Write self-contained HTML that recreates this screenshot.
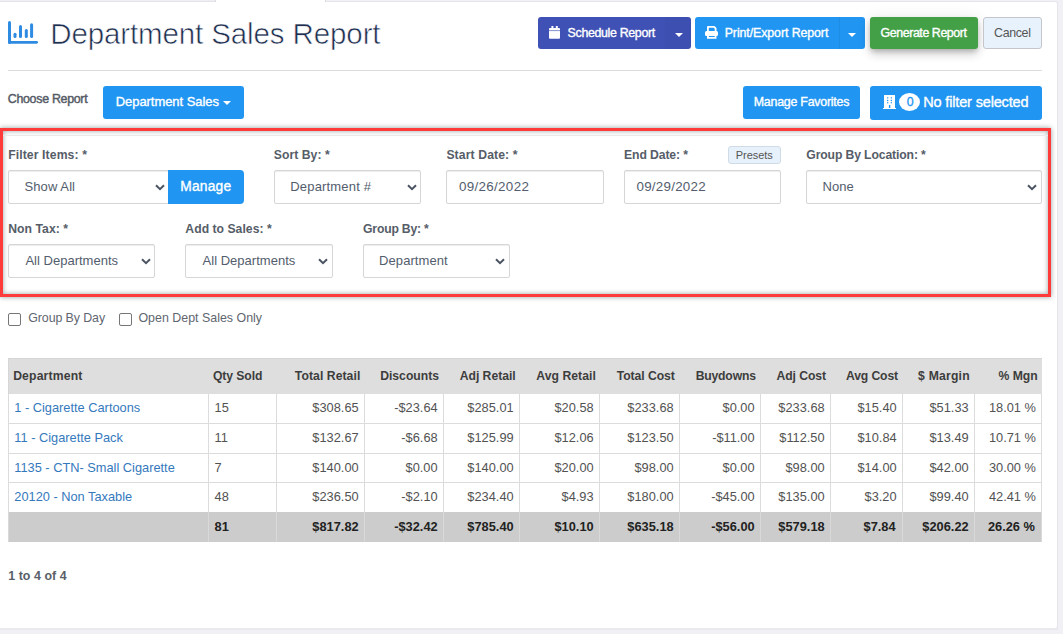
<!DOCTYPE html>
<html><head><meta charset="utf-8">
<style>
*{box-sizing:border-box;margin:0;padding:0}
html,body{width:1063px;height:634px;overflow:hidden;background:#f1f1f5;font-family:"Liberation Sans",sans-serif;position:relative}
.a{position:absolute}
.t{position:absolute;white-space:nowrap;line-height:normal;font-family:"Liberation Sans",sans-serif}
.sel{position:absolute;height:34px;border:1px solid #d6d5d7;border-radius:2px;background:#fff;box-shadow:inset 0 1px 1px rgba(0,0,0,0.075)}
.chev{position:absolute;width:10px;height:7px}
.vl{position:absolute;width:1px;background:#dcdcdc}
.hl{position:absolute;height:1px;background:#dcdcdc}
</style></head><body>
<!-- card -->
<div class="a" style="left:-10px;top:1px;width:1068px;height:628px;background:#e5e6eb;border-radius:3px"></div>
<div class="a" style="left:-10px;top:2px;width:1067px;height:626px;background:#fff;border-radius:2px"></div>
<div class="a" style="left:-10px;top:628px;width:1068px;height:2px;background:#e9e9ee"></div>
<!-- tab gap -->
<div class="a" style="left:0;top:0;width:216px;height:2px;background:#eeeef3;border-bottom:1px solid #e4e5ea"></div>
<div class="a" style="left:215px;top:0;width:1px;height:2px;background:#dcdcdf"></div>
<div class="a" style="left:216px;top:0;width:109px;height:3px;background:#fff"></div>
<div class="a" style="left:325px;top:0;width:1px;height:2px;background:#dcdcdf"></div>

<!-- title icon -->
<svg class="a" style="left:8px;top:21px" width="31" height="23" viewBox="0 0 31 23">
<g fill="#2e8be2">
<rect x="0" y="0" width="3" height="23" rx="1.5"/>
<rect x="0" y="19.9" width="30" height="2.9" rx="1.45"/>
<rect x="5.5" y="11.8" width="3" height="5.2" rx="1.5"/>
<rect x="11" y="4" width="3" height="13" rx="1.5"/>
<rect x="16.8" y="8" width="3" height="9" rx="1.5"/>
<rect x="22.1" y="2.3" width="3" height="14.7" rx="1.5"/>
</g></svg>

<!-- header buttons -->
<div class="a" style="left:538px;top:17px;width:153px;height:32px;background:#3f51b5;border-radius:3px;overflow:hidden">
  <div class="a" style="left:127px;top:0;width:26px;height:32px;background:rgba(0,0,0,0.025)"></div>
</div>
<svg class="a" style="left:549px;top:26px" width="12" height="13" viewBox="0 0 12 13"><g fill="#fff">
<rect x="0" y="2" width="11" height="10.7" rx="1"/><rect x="2.4" y="0" width="2" height="3"/><rect x="6.8" y="0" width="2" height="3"/></g>
<rect x="0" y="4.2" width="11" height="0.9" fill="#3f51b5" opacity="0.7"/></svg>
<svg class="a" style="left:675px;top:33px" width="8" height="4" viewBox="0 0 8 4"><path d="M0 0H8L4 4Z" fill="#fff"/></svg>

<div class="a" style="left:695px;top:17px;width:170px;height:32px;background:#2095f1;border-radius:3px;overflow:hidden">
  <div class="a" style="left:144px;top:0;width:1px;height:32px;background:rgba(0,0,0,0.05)"></div>
</div>
<svg class="a" style="left:705px;top:26px" width="13" height="13" viewBox="0 0 13 13"><g fill="#fff" fill-rule="evenodd">
<path d="M2 1Q2 0 3 0H9.5L11.5 2V6H2Z M3.8 1.8V5H9.7V2.8L8.7 1.8Z"/>
<rect x="0" y="5" width="13" height="5" rx="1.5"/>
<path d="M2 9H11.5V12.7H2Z M3.8 9.2V11H9.7V9.2Z"/></g></svg>
<svg class="a" style="left:848px;top:33px" width="8" height="4" viewBox="0 0 8 4"><path d="M0 0H8L4 4Z" fill="#fff"/></svg>

<div class="a" style="left:870px;top:17px;width:108px;height:32px;background:#43a047;border-radius:3px;box-shadow:0 3px 5px -1px rgba(0,0,0,.2), 0 6px 10px 0 rgba(0,0,0,.12), 0 1px 14px 0 rgba(0,0,0,.10)"></div>
<div class="a" style="left:983px;top:17px;width:59px;height:32px;background:#e8f2fc;border:1px solid #c4c6c9;border-radius:3px"></div>

<div class="a" style="left:8px;top:70px;width:1034px;height:1px;background:#dcdcdc"></div>

<div class="a" style="left:103px;top:86px;width:141px;height:33px;background:#2095f1;border-radius:3px"></div>
<svg class="a" style="left:223px;top:101px" width="8" height="4" viewBox="0 0 8 4"><path d="M0 0H8L4 4Z" fill="#fff"/></svg>
<div class="a" style="left:743px;top:86px;width:117px;height:33px;background:#2095f1;border-radius:3px"></div>
<div class="a" style="left:870px;top:86px;width:172px;height:34px;background:#2095f1;border-radius:3px"></div>
<svg class="a" style="left:883px;top:95px" width="13" height="14" viewBox="0 0 13 14"><g fill="#fff">
<path d="M1 0H12V13H13V14H0V13H1Z"/></g><g fill="#2095f1">
<rect x="4" y="2.3" width="1.3" height="1.1"/><rect x="7.7" y="2.3" width="1.3" height="1.1"/>
<rect x="4" y="4.8" width="1.3" height="1.3"/><rect x="7.7" y="4.8" width="1.3" height="1.3"/>
<rect x="4" y="7.2" width="1.3" height="1.1"/><rect x="7.7" y="7.2" width="1.3" height="1.1"/>
<rect x="5.9" y="10" width="1.4" height="3"/></g></svg>
<div class="a" style="left:899px;top:93px;width:21px;height:18px;background:#fff;border-radius:50%"></div>

<!-- red annotation box -->
<div class="a" style="left:0;top:128px;width:1051px;height:169px;border:3px solid #ff3a3a;box-shadow:0 0 5px rgba(0,25,25,0.42), inset 0 0 5px rgba(0,25,25,0.40)"></div>
<div class="a" style="left:3px;top:135px;width:1045px;height:1px;background:#e9e9e9"></div>

<!-- filter controls -->
<div class="sel" style="left:8px;top:170px;width:161px;border-radius:2px 0 0 2px"></div>
<div class="a" style="left:168px;top:170px;width:76px;height:34px;background:#2095f1;border-radius:0 4px 4px 0"></div>
<div class="sel" style="left:274px;top:170px;width:147px"></div>
<div class="sel" style="left:446px;top:170px;width:158px"></div>
<div class="a" style="left:728px;top:146px;width:53px;height:18px;background:#e7f1fb;border:1px solid #cfdbe6;border-radius:3px"></div>
<div class="sel" style="left:624px;top:170px;width:157px"></div>
<div class="sel" style="left:806px;top:170px;width:236px"></div>
<div class="sel" style="left:8px;top:244px;width:147px"></div>
<div class="sel" style="left:185px;top:244px;width:148px"></div>
<div class="sel" style="left:363px;top:244px;width:147px"></div>
<svg class="a" style="left:154.5px;top:184px" width="10" height="7" viewBox="0 0 10 7"><path d="M1 1.2L5 5.2L9 1.2" fill="none" stroke="#4b5463" stroke-width="2"/></svg>
<svg class="a" style="left:406.5px;top:184px" width="10" height="7" viewBox="0 0 10 7"><path d="M1 1.2L5 5.2L9 1.2" fill="none" stroke="#4b5463" stroke-width="2"/></svg>
<svg class="a" style="left:1027px;top:184px" width="10" height="7" viewBox="0 0 10 7"><path d="M1 1.2L5 5.2L9 1.2" fill="none" stroke="#4b5463" stroke-width="2"/></svg>
<svg class="a" style="left:140.5px;top:258px" width="10" height="7" viewBox="0 0 10 7"><path d="M1 1.2L5 5.2L9 1.2" fill="none" stroke="#4b5463" stroke-width="2"/></svg>
<svg class="a" style="left:318px;top:258px" width="10" height="7" viewBox="0 0 10 7"><path d="M1 1.2L5 5.2L9 1.2" fill="none" stroke="#4b5463" stroke-width="2"/></svg>
<svg class="a" style="left:495px;top:258px" width="10" height="7" viewBox="0 0 10 7"><path d="M1 1.2L5 5.2L9 1.2" fill="none" stroke="#4b5463" stroke-width="2"/></svg>


<!-- checkboxes -->
<div class="a" style="left:8px;top:313px;width:13px;height:13px;border:1px solid #767676;border-radius:2px;background:#fff"></div>
<div class="a" style="left:119px;top:313px;width:13px;height:13px;border:1px solid #767676;border-radius:2px;background:#fff"></div>

<!-- table -->
<div class="a" style="left:8px;top:358px;width:1034px;height:36px;background:#dedede;border-top:1px solid #d6d6d6;border-left:1px solid #d6d6d6"></div>
<div class="a" style="left:8px;top:512px;width:1034px;height:30px;background:#cccccc"></div>
<div class="vl" style="left:8px;top:394px;height:118px"></div>
<div class="vl" style="left:8px;top:512px;height:30px;background:#d9d9d9"></div>
<div class="vl" style="left:208px;top:394px;height:118px"></div>
<div class="vl" style="left:208px;top:512px;height:30px;background:#d9d9d9"></div>
<div class="vl" style="left:276px;top:394px;height:118px"></div>
<div class="vl" style="left:276px;top:512px;height:30px;background:#d9d9d9"></div>
<div class="vl" style="left:364px;top:394px;height:118px"></div>
<div class="vl" style="left:364px;top:512px;height:30px;background:#d9d9d9"></div>
<div class="vl" style="left:443px;top:394px;height:118px"></div>
<div class="vl" style="left:443px;top:512px;height:30px;background:#d9d9d9"></div>
<div class="vl" style="left:519px;top:394px;height:118px"></div>
<div class="vl" style="left:519px;top:512px;height:30px;background:#d9d9d9"></div>
<div class="vl" style="left:599px;top:394px;height:118px"></div>
<div class="vl" style="left:599px;top:512px;height:30px;background:#d9d9d9"></div>
<div class="vl" style="left:679px;top:394px;height:118px"></div>
<div class="vl" style="left:679px;top:512px;height:30px;background:#d9d9d9"></div>
<div class="vl" style="left:760px;top:394px;height:118px"></div>
<div class="vl" style="left:760px;top:512px;height:30px;background:#d9d9d9"></div>
<div class="vl" style="left:830px;top:394px;height:118px"></div>
<div class="vl" style="left:830px;top:512px;height:30px;background:#d9d9d9"></div>
<div class="vl" style="left:902px;top:394px;height:118px"></div>
<div class="vl" style="left:902px;top:512px;height:30px;background:#d9d9d9"></div>
<div class="vl" style="left:974px;top:394px;height:118px"></div>
<div class="vl" style="left:974px;top:512px;height:30px;background:#d9d9d9"></div>
<div class="vl" style="left:1041px;top:394px;height:118px"></div>
<div class="vl" style="left:1041px;top:512px;height:30px;background:#d9d9d9"></div>
<div class="hl" style="left:8px;top:423px;width:1034px"></div>
<div class="hl" style="left:8px;top:453px;width:1034px"></div>
<div class="hl" style="left:8px;top:482px;width:1034px"></div>

<div class="t" id="t0" style="left:50.19px;top:17px;font-size:29.5px;font-weight:normal;letter-spacing:-0.114px;color:#1f2f50;-webkit-text-stroke:0.6px #fff">Department Sales Report</div>
<div class="t" id="t1" style="left:567.61px;top:26px;font-size:12.4px;font-weight:normal;letter-spacing:-0.336px;color:#fff;-webkit-text-stroke:0.35px #fff">Schedule Report</div>
<div class="t" id="t2" style="left:724.71px;top:26px;font-size:12.4px;font-weight:normal;letter-spacing:-0.096px;color:#fff;-webkit-text-stroke:0.35px #fff">Print/Export Report</div>
<div class="t" id="t3" style="left:880.60px;top:26px;font-size:12.4px;font-weight:normal;letter-spacing:-0.427px;color:#fff;-webkit-text-stroke:0.35px #fff">Generate Report</div>
<div class="t" id="t4" style="left:994.06px;top:26px;font-size:12.4px;font-weight:normal;letter-spacing:-0.345px;color:#555;">Cancel</div>
<div class="t" id="t5" style="left:7.75px;top:92px;font-size:12.4px;font-weight:normal;letter-spacing:-0.287px;color:#555b66;-webkit-text-stroke:0.45px #555b66">Choose Report</div>
<div class="t" id="t6" style="left:115.70px;top:94px;font-size:13.0px;font-weight:normal;letter-spacing:-0.049px;color:#fff;-webkit-text-stroke:0.35px #fff">Department Sales</div>
<div class="t" id="t7" style="left:753.79px;top:95px;font-size:12.4px;font-weight:normal;letter-spacing:-0.236px;color:#fff;-webkit-text-stroke:0.35px #fff">Manage Favorites</div>
<div class="t" id="t8" style="left:923.31px;top:94px;font-size:14.5px;font-weight:normal;letter-spacing:-0.164px;color:#fff;-webkit-text-stroke:0.35px #fff">No filter selected</div>
<div class="t" id="t9" style="left:906.80px;top:95px;font-size:12.4px;font-weight:normal;letter-spacing:0.000px;color:#2196f3;-webkit-text-stroke:0.3px #2196f3">0</div>
<div class="t" id="t10" style="left:8.17px;top:148px;font-size:12.2px;font-weight:bold;letter-spacing:0.108px;color:#565d68;">Filter Items: *</div>
<div class="t" id="t11" style="left:273.84px;top:148px;font-size:12.2px;font-weight:bold;letter-spacing:0.039px;color:#565d68;">Sort By: *</div>
<div class="t" id="t12" style="left:446.39px;top:148px;font-size:12.2px;font-weight:bold;letter-spacing:0.118px;color:#565d68;">Start Date: *</div>
<div class="t" id="t13" style="left:624.01px;top:148px;font-size:12.2px;font-weight:bold;letter-spacing:-0.096px;color:#565d68;">End Date: *</div>
<div class="t" id="t14" style="left:806.29px;top:148px;font-size:12.2px;font-weight:bold;letter-spacing:-0.123px;color:#565d68;">Group By Location: *</div>
<div class="t" id="t15" style="left:8.17px;top:222px;font-size:12.2px;font-weight:bold;letter-spacing:0.058px;color:#565d68;">Non Tax: *</div>
<div class="t" id="t16" style="left:185.37px;top:222px;font-size:12.2px;font-weight:bold;letter-spacing:0.021px;color:#565d68;">Add to Sales: *</div>
<div class="t" id="t17" style="left:363.07px;top:222px;font-size:12.2px;font-weight:bold;letter-spacing:-0.195px;color:#565d68;">Group By: *</div>
<div class="t" id="t18" style="left:24.53px;top:179px;font-size:13.0px;font-weight:normal;letter-spacing:0.089px;color:#535d6d;">Show All</div>
<div class="t" id="t19" style="left:290.29px;top:179px;font-size:13.0px;font-weight:normal;letter-spacing:0.171px;color:#535d6d;">Department #</div>
<div class="t" id="t20" style="left:458.93px;top:179px;font-size:13.4px;font-weight:normal;letter-spacing:0.324px;color:#535d6d;">09/26/2022</div>
<div class="t" id="t21" style="left:636.49px;top:179px;font-size:13.4px;font-weight:normal;letter-spacing:0.239px;color:#535d6d;">09/29/2022</div>
<div class="t" id="t22" style="left:822.49px;top:179px;font-size:13.0px;font-weight:normal;letter-spacing:0.054px;color:#535d6d;">None</div>
<div class="t" id="t23" style="left:25.41px;top:253px;font-size:13.0px;font-weight:normal;letter-spacing:0.011px;color:#535d6d;">All Departments</div>
<div class="t" id="t24" style="left:202.56px;top:253px;font-size:13.0px;font-weight:normal;letter-spacing:0.023px;color:#535d6d;">All Departments</div>
<div class="t" id="t25" style="left:379.07px;top:253px;font-size:13.0px;font-weight:normal;letter-spacing:0.077px;color:#535d6d;">Department</div>
<div class="t" id="t26" style="left:180.34px;top:179px;font-size:13.8px;font-weight:normal;letter-spacing:0.180px;color:#fff;-webkit-text-stroke:0.35px #fff">Manage</div>
<div class="t" id="t27" style="left:735.77px;top:149px;font-size:11px;font-weight:normal;letter-spacing:-0.040px;color:#555;">Presets</div>
<div class="t" id="t28" style="left:28.28px;top:311px;font-size:12.4px;font-weight:normal;letter-spacing:-0.091px;color:#5f6670;">Group By Day</div>
<div class="t" id="t29" style="left:138.46px;top:311px;font-size:12.4px;font-weight:normal;letter-spacing:0.017px;color:#5f6670;">Open Dept Sales Only</div>
<div class="t" id="t30" style="left:8.23px;top:569px;font-size:12.4px;font-weight:bold;letter-spacing:0.054px;color:#595f68;">1 to 4 of 4</div>
<div class="t" id="t31" style="left:13.17px;top:369px;font-size:12.2px;font-weight:bold;letter-spacing:0.160px;color:#3d3d3d;">Department</div>
<div class="t" id="t32" style="left:212.97px;top:369px;font-size:12.2px;font-weight:bold;letter-spacing:-0.086px;color:#3d3d3d;">Qty Sold</div>
<div class="t" id="t33" style="left:294.82px;top:369px;font-size:12.2px;font-weight:bold;letter-spacing:0.063px;color:#3d3d3d;">Total Retail</div>
<div class="t" id="t34" style="left:380.21px;top:369px;font-size:12.2px;font-weight:bold;letter-spacing:-0.017px;color:#3d3d3d;">Discounts</div>
<div class="t" id="t35" style="left:459.73px;top:369px;font-size:12.2px;font-weight:bold;letter-spacing:-0.031px;color:#3d3d3d;">Adj Retail</div>
<div class="t" id="t36" style="left:536.37px;top:369px;font-size:12.2px;font-weight:bold;letter-spacing:0.038px;color:#3d3d3d;">Avg Retail</div>
<div class="t" id="t37" style="left:616.66px;top:369px;font-size:12.2px;font-weight:bold;letter-spacing:-0.059px;color:#3d3d3d;">Total Cost</div>
<div class="t" id="t38" style="left:695.63px;top:369px;font-size:12.2px;font-weight:bold;letter-spacing:-0.181px;color:#3d3d3d;">Buydowns</div>
<div class="t" id="t39" style="left:776.53px;top:369px;font-size:12.2px;font-weight:bold;letter-spacing:-0.088px;color:#3d3d3d;">Adj Cost</div>
<div class="t" id="t40" style="left:845.93px;top:369px;font-size:12.2px;font-weight:bold;letter-spacing:-0.114px;color:#3d3d3d;">Avg Cost</div>
<div class="t" id="t41" style="left:918.09px;top:369px;font-size:12.2px;font-weight:bold;letter-spacing:0.204px;color:#3d3d3d;">$ Margin</div>
<div class="t" id="t42" style="left:998.53px;top:369px;font-size:12.2px;font-weight:bold;letter-spacing:-0.038px;color:#3d3d3d;">% Mgn</div>
<div class="t" style="left:14.30px;top:400px;font-size:12.8px;font-weight:normal;letter-spacing:0px;color:#3579bd">1 - Cigarette Cartoons</div>
<div class="t" style="left:214.60px;top:400px;font-size:12.8px;font-weight:normal;letter-spacing:0px;color:#525252">15</div>
<div class="t" style="left:312.36px;top:400px;font-size:12.8px;font-weight:normal;letter-spacing:0px;color:#525252">$308.65</div>
<div class="t" style="left:394.22px;top:400px;font-size:12.8px;font-weight:normal;letter-spacing:0px;color:#525252">-$23.64</div>
<div class="t" style="left:467.36px;top:400px;font-size:12.8px;font-weight:normal;letter-spacing:0px;color:#525252">$285.01</div>
<div class="t" style="left:554.48px;top:400px;font-size:12.8px;font-weight:normal;letter-spacing:0px;color:#525252">$20.58</div>
<div class="t" style="left:627.36px;top:400px;font-size:12.8px;font-weight:normal;letter-spacing:0px;color:#525252">$233.68</div>
<div class="t" style="left:722.59px;top:400px;font-size:12.8px;font-weight:normal;letter-spacing:0px;color:#525252">$0.00</div>
<div class="t" style="left:778.36px;top:400px;font-size:12.8px;font-weight:normal;letter-spacing:0px;color:#525252">$233.68</div>
<div class="t" style="left:857.48px;top:400px;font-size:12.8px;font-weight:normal;letter-spacing:0px;color:#525252">$15.40</div>
<div class="t" style="left:929.48px;top:400px;font-size:12.8px;font-weight:normal;letter-spacing:0px;color:#525252">$51.33</div>
<div class="t" style="left:988.92px;top:400px;font-size:12.8px;font-weight:normal;letter-spacing:0px;color:#525252">18.01 %</div>
<div class="t" style="left:14.30px;top:430px;font-size:12.8px;font-weight:normal;letter-spacing:0px;color:#3579bd">11 - Cigarette Pack</div>
<div class="t" style="left:214.60px;top:430px;font-size:12.8px;font-weight:normal;letter-spacing:0px;color:#525252">11</div>
<div class="t" style="left:312.36px;top:430px;font-size:12.8px;font-weight:normal;letter-spacing:0px;color:#525252">$132.67</div>
<div class="t" style="left:401.33px;top:430px;font-size:12.8px;font-weight:normal;letter-spacing:0px;color:#525252">-$6.68</div>
<div class="t" style="left:467.36px;top:430px;font-size:12.8px;font-weight:normal;letter-spacing:0px;color:#525252">$125.99</div>
<div class="t" style="left:554.48px;top:430px;font-size:12.8px;font-weight:normal;letter-spacing:0px;color:#525252">$12.06</div>
<div class="t" style="left:627.36px;top:430px;font-size:12.8px;font-weight:normal;letter-spacing:0px;color:#525252">$123.50</div>
<div class="t" style="left:712.17px;top:430px;font-size:12.8px;font-weight:normal;letter-spacing:0px;color:#525252">-$11.00</div>
<div class="t" style="left:779.31px;top:430px;font-size:12.8px;font-weight:normal;letter-spacing:0px;color:#525252">$112.50</div>
<div class="t" style="left:857.48px;top:430px;font-size:12.8px;font-weight:normal;letter-spacing:0px;color:#525252">$10.84</div>
<div class="t" style="left:929.48px;top:430px;font-size:12.8px;font-weight:normal;letter-spacing:0px;color:#525252">$13.49</div>
<div class="t" style="left:988.92px;top:430px;font-size:12.8px;font-weight:normal;letter-spacing:0px;color:#525252">10.71 %</div>
<div class="t" style="left:14.30px;top:460px;font-size:12.8px;font-weight:normal;letter-spacing:0px;color:#3579bd">1135 - CTN- Small Cigarette</div>
<div class="t" style="left:214.60px;top:460px;font-size:12.8px;font-weight:normal;letter-spacing:0px;color:#525252">7</div>
<div class="t" style="left:312.36px;top:460px;font-size:12.8px;font-weight:normal;letter-spacing:0px;color:#525252">$140.00</div>
<div class="t" style="left:405.59px;top:460px;font-size:12.8px;font-weight:normal;letter-spacing:0px;color:#525252">$0.00</div>
<div class="t" style="left:467.36px;top:460px;font-size:12.8px;font-weight:normal;letter-spacing:0px;color:#525252">$140.00</div>
<div class="t" style="left:554.48px;top:460px;font-size:12.8px;font-weight:normal;letter-spacing:0px;color:#525252">$20.00</div>
<div class="t" style="left:634.48px;top:460px;font-size:12.8px;font-weight:normal;letter-spacing:0px;color:#525252">$98.00</div>
<div class="t" style="left:722.59px;top:460px;font-size:12.8px;font-weight:normal;letter-spacing:0px;color:#525252">$0.00</div>
<div class="t" style="left:785.48px;top:460px;font-size:12.8px;font-weight:normal;letter-spacing:0px;color:#525252">$98.00</div>
<div class="t" style="left:857.48px;top:460px;font-size:12.8px;font-weight:normal;letter-spacing:0px;color:#525252">$14.00</div>
<div class="t" style="left:929.48px;top:460px;font-size:12.8px;font-weight:normal;letter-spacing:0px;color:#525252">$42.00</div>
<div class="t" style="left:988.92px;top:460px;font-size:12.8px;font-weight:normal;letter-spacing:0px;color:#525252">30.00 %</div>
<div class="t" style="left:14.30px;top:489px;font-size:12.8px;font-weight:normal;letter-spacing:0px;color:#3579bd">20120 - Non Taxable</div>
<div class="t" style="left:214.60px;top:489px;font-size:12.8px;font-weight:normal;letter-spacing:0px;color:#525252">48</div>
<div class="t" style="left:312.36px;top:489px;font-size:12.8px;font-weight:normal;letter-spacing:0px;color:#525252">$236.50</div>
<div class="t" style="left:401.33px;top:489px;font-size:12.8px;font-weight:normal;letter-spacing:0px;color:#525252">-$2.10</div>
<div class="t" style="left:467.36px;top:489px;font-size:12.8px;font-weight:normal;letter-spacing:0px;color:#525252">$234.40</div>
<div class="t" style="left:561.59px;top:489px;font-size:12.8px;font-weight:normal;letter-spacing:0px;color:#525252">$4.93</div>
<div class="t" style="left:627.36px;top:489px;font-size:12.8px;font-weight:normal;letter-spacing:0px;color:#525252">$180.00</div>
<div class="t" style="left:711.22px;top:489px;font-size:12.8px;font-weight:normal;letter-spacing:0px;color:#525252">-$45.00</div>
<div class="t" style="left:778.36px;top:489px;font-size:12.8px;font-weight:normal;letter-spacing:0px;color:#525252">$135.00</div>
<div class="t" style="left:864.59px;top:489px;font-size:12.8px;font-weight:normal;letter-spacing:0px;color:#525252">$3.20</div>
<div class="t" style="left:929.48px;top:489px;font-size:12.8px;font-weight:normal;letter-spacing:0px;color:#525252">$99.40</div>
<div class="t" style="left:988.92px;top:489px;font-size:12.8px;font-weight:normal;letter-spacing:0px;color:#525252">42.41 %</div>
<div class="t" style="left:214.60px;top:519px;font-size:12.8px;font-weight:bold;letter-spacing:0px;color:#222">81</div>
<div class="t" style="left:312.36px;top:519px;font-size:12.8px;font-weight:bold;letter-spacing:0px;color:#222">$817.82</div>
<div class="t" style="left:394.22px;top:519px;font-size:12.8px;font-weight:bold;letter-spacing:0px;color:#222">-$32.42</div>
<div class="t" style="left:467.36px;top:519px;font-size:12.8px;font-weight:bold;letter-spacing:0px;color:#222">$785.40</div>
<div class="t" style="left:554.48px;top:519px;font-size:12.8px;font-weight:bold;letter-spacing:0px;color:#222">$10.10</div>
<div class="t" style="left:627.36px;top:519px;font-size:12.8px;font-weight:bold;letter-spacing:0px;color:#222">$635.18</div>
<div class="t" style="left:711.22px;top:519px;font-size:12.8px;font-weight:bold;letter-spacing:0px;color:#222">-$56.00</div>
<div class="t" style="left:778.36px;top:519px;font-size:12.8px;font-weight:bold;letter-spacing:0px;color:#222">$579.18</div>
<div class="t" style="left:863.59px;top:519px;font-size:12.8px;font-weight:bold;letter-spacing:0px;color:#222">$7.84</div>
<div class="t" style="left:922.36px;top:519px;font-size:12.8px;font-weight:bold;letter-spacing:0px;color:#222">$206.22</div>
<div class="t" style="left:987.92px;top:519px;font-size:12.8px;font-weight:bold;letter-spacing:0px;color:#222">26.26 %</div>
</body></html>
